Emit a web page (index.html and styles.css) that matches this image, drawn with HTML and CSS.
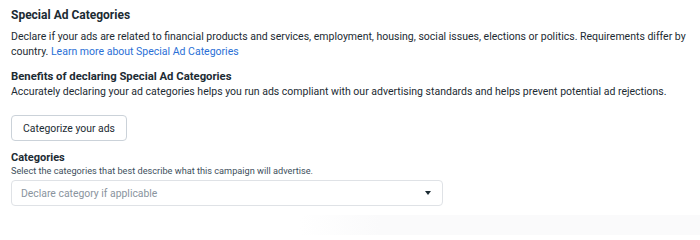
FILE: index.html
```html
<!DOCTYPE html>
<html lang="en">
<head>
<meta charset="utf-8">
<title>Special Ad Categories</title>
<link rel="stylesheet" href="styles.css">
</head>
<body>
<div class="page">
  <section class="section">
    <h2 class="title">Special Ad Categories</h2>
    <p class="text">Declare if your ads are related to financial products and services, employment, housing, social issues, elections or politics. Requirements differ by country. <a class="link" href="#">Learn more about Special Ad Categories</a></p>
  </section>
  <section class="section benefits">
    <h3 class="subtitle">Benefits of declaring Special Ad Categories</h3>
    <p class="text">Accurately declaring your ad categories helps you run ads compliant with our advertising standards and helps prevent potential ad rejections.</p>
  </section>
  <button class="btn" type="button">Categorize your ads</button>
  <section class="field">
    <h3 class="field-label">Categories</h3>
    <p class="field-help">Select the categories that best describe what this campaign will advertise.</p>
    <div class="select">
      <span class="placeholder">Declare category if applicable</span>
      <span class="caret"></span>
    </div>
  </section>
</div>
<div class="next-card"></div>
</body>
</html>
```

FILE: styles.css
```css
html, body {
  margin: 0;
  padding: 0;
  background: #ffffff;
}
body {
  font-family: "Roboto", "Liberation Sans", Arial, sans-serif;
  color: #1c2b33;
  -webkit-font-smoothing: antialiased;
}
.page {
  padding: 8px 11px 0 11px;
  display: flex;
  flex-direction: column;
  align-items: flex-start;
}
.section {
  margin: 0;
}
.title {
  margin: 0 0 6px 0;
  font-size: 12px;
  line-height: 15px;
  font-weight: 700;
}
.text {
  margin: 0;
  font-size: 10.5px;
  line-height: 15px;
}
.link {
  color: #2a6fd6;
  text-decoration: none;
}
.benefits {
  margin-top: 10px;
}
.subtitle {
  margin: 0;
  font-size: 11.3px;
  line-height: 15px;
  font-weight: 700;
}
.btn {
  margin-top: 16px;
  height: 26px;
  width: 116px;
  padding: 0;
  border: 1px solid #cbd2d9;
  border-radius: 4px;
  background: #ffffff;
  font-family: inherit;
  font-size: 10.4px;
  color: #1c2b33;
}
.field {
  margin-top: 10px;
  align-self: stretch;
}
.field-label {
  margin: 0;
  font-size: 11px;
  line-height: 14px;
  font-weight: 700;
}
.field-help {
  margin: 0 0 3px 0;
  font-size: 9.2px;
  line-height: 12px;
  color: #3e4f5c;
}
.select {
  width: 432px;
  height: 26px;
  box-sizing: border-box;
  border: 1px solid #dfe2e6;
  border-radius: 4px;
  display: flex;
  align-items: center;
  justify-content: space-between;
  padding: 0 10px 0 9px;
}
.placeholder {
  font-size: 10.4px;
  color: #8a949e;
}
.caret {
  width: 0;
  height: 0;
  border-left: 3.5px solid transparent;
  border-right: 3.5px solid transparent;
  border-top: 4px solid #1c2b33;
  margin-right: 1px;
}
.next-card {
  margin-top: 9px;
  margin-left: 300px;
  height: 20px;
  background: linear-gradient(to right, rgba(250, 250, 251, 0), #fafafb 80px);
}
```
